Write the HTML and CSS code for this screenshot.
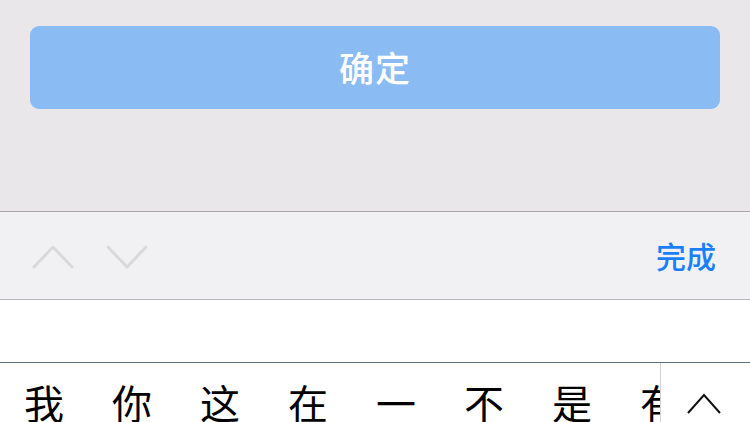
FILE: index.html
```html
<!DOCTYPE html>
<html lang="zh">
<head>
<meta charset="utf-8">
<link rel="stylesheet" href="styles.css">
</head>
<body>
<div class="screen">
  <div class="top">
    <div class="btn">确定</div>
  </div>
  <div class="toolbar">
    <div class="arrows">
      <svg class="chev" width="42" height="24" viewBox="0 0 42 24"><path d="M2 22 L21 2 L40 22" fill="none" stroke="#d9d9db" stroke-width="3" stroke-linecap="round" stroke-linejoin="round"/></svg>
      <svg class="chev" width="42" height="24" viewBox="0 0 42 24"><path d="M2 2 L21 22 L40 2" fill="none" stroke="#d9d9db" stroke-width="3" stroke-linecap="round" stroke-linejoin="round"/></svg>
    </div>
    <div class="done">完成</div>
  </div>
  <div class="blank"></div>
  <div class="cands">
    <div class="list">
      <span>我</span><span>你</span><span>这</span><span>在</span><span>一</span><span>不</span><span>是</span><span>有</span>
    </div>
    <div class="more">
      <svg width="34" height="22" viewBox="0 0 34 22"><path d="M1 20 L17 2 L33 20" fill="none" stroke="#111" stroke-width="2"/></svg>
    </div>
  </div>
</div>
</body>
</html>
```
FILE: styles.css
```css
html, body {
  margin: 0;
  padding: 0;
}
body {
  width: 750px;
  height: 422px;
  overflow: hidden;
  font-family: "Noto Sans CJK SC", "Noto Sans", sans-serif;
}
.screen {
  display: flex;
  flex-direction: column;
  height: 422px;
}
.top {
  height: 211px;
  box-sizing: border-box;
  padding: 26px 30px 0;
  background: #e9e7ea;
}
.btn {
  height: 83px;
  border-radius: 9px;
  background: #8bbbf3;
  color: #fff;
  font-size: 35px;
  font-weight: 500;
  display: flex;
  align-items: center;
  justify-content: center;
  letter-spacing: 1px;
  padding-bottom: 2px;
  box-sizing: border-box;
}
.toolbar {
  height: 87px;
  box-sizing: content-box;
  border-top: 1px solid #a7a7aa;
  border-bottom: 1px solid #b8b8bb;
  background: #f1f1f4;
  display: flex;
  align-items: center;
  justify-content: space-between;
  padding: 0 34px 0 32px;
}
.arrows {
  display: flex;
  gap: 32px;
  margin-top: 2px;
}
.chev {
  display: block;
}
.done {
  color: #1a7ffa;
  font-size: 30px;
  font-weight: 500;
  margin-bottom: 2px;
}
.blank {
  height: 62px;
  background: #fff;
  border-bottom: 1px solid #5f6d7e;
}
.cands {
  flex: 1;
  display: flex;
  background: #fff;
  overflow: hidden;
}
.list {
  width: 661px;
  overflow: hidden;
  white-space: nowrap;
  border-right: 1px solid #d2d2d4;
  display: flex;
  gap: 48px;
  padding-left: 24px;
  box-sizing: border-box;
  font-size: 40px;
  line-height: 40px;
  color: #000;
  padding-top: 19px;
}
.list span {
  flex: none;
  width: 40px;
}
.more {
  flex: 1;
  display: flex;
  justify-content: center;
  padding-top: 30px;
  padding-right: 4px;
}
.more svg {
  display: block;
}
```
